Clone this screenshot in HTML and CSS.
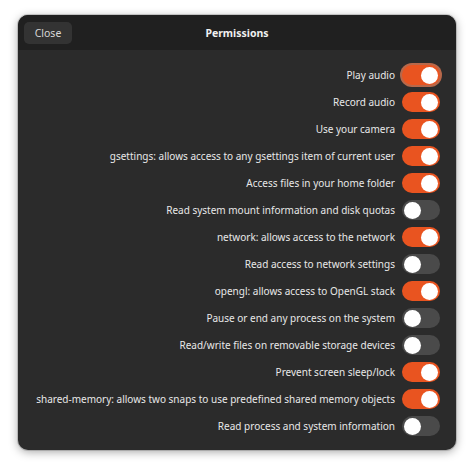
FILE: index.html
```html
<!DOCTYPE html>
<html>
<head>
<meta charset="utf-8">
<link rel="stylesheet" href="styles.css">
</head>
<body>
<div class="window">
  <div class="header">
    <button class="close">Close</button>
    <div class="title">Permissions</div>
  </div>
  <div class="list">
    <div class="row"><span>Play audio</span><span class="switch on focus"></span></div>
    <div class="row"><span>Record audio</span><span class="switch on"></span></div>
    <div class="row"><span>Use your camera</span><span class="switch on"></span></div>
    <div class="row"><span>gsettings: allows access to any gsettings item of current user</span><span class="switch on"></span></div>
    <div class="row"><span>Access files in your home folder</span><span class="switch on"></span></div>
    <div class="row"><span>Read system mount information and disk quotas</span><span class="switch"></span></div>
    <div class="row"><span>network: allows access to the network</span><span class="switch on"></span></div>
    <div class="row"><span>Read access to network settings</span><span class="switch"></span></div>
    <div class="row"><span>opengl: allows access to OpenGL stack</span><span class="switch on"></span></div>
    <div class="row"><span>Pause or end any process on the system</span><span class="switch"></span></div>
    <div class="row"><span>Read/write files on removable storage devices</span><span class="switch"></span></div>
    <div class="row"><span>Prevent screen sleep/lock</span><span class="switch on"></span></div>
    <div class="row"><span>shared-memory: allows two snaps to use predefined shared memory objects</span><span class="switch on"></span></div>
    <div class="row"><span>Read process and system information</span><span class="switch"></span></div>
  </div>
</div>
</body>
</html>
```
FILE: styles.css
```css
html, body {
  margin: 0;
  padding: 0;
  background: #ffffff;
  font-family: "Noto Sans", "DejaVu Sans", sans-serif;
}
body {
  padding: 15px 18px;
}
.window {
  width: 438px;
  height: 435px;
  background: #2b2b2b;
  border-radius: 10px;
  overflow: hidden;
  box-shadow: 0 2px 10px rgba(0,0,0,0.35), 0 0 0 1px rgba(0,0,0,0.15);
  display: flex;
  flex-direction: column;
}
.header {
  height: 35px;
  background: #202020;
  display: flex;
  align-items: center;
  padding: 0 6px;
  position: relative;
  flex: none;
}
.close {
  width: 48px;
  height: 22px;
  border: none;
  border-radius: 5px;
  background: #333333;
  color: #d8d8d8;
  font-family: inherit;
  font-size: 10.5px;
  padding: 0;
  margin-top: 1px;
}
.title {
  position: absolute;
  left: 0;
  right: 0;
  text-align: center;
  color: #f0f0f0;
  font-weight: bold;
  font-size: 10.5px;
  pointer-events: none;
}
.list {
  padding: 15px 16px 15px 0;
  display: flex;
  flex-direction: column;
  gap: 7px;
}
.row {
  display: flex;
  justify-content: flex-end;
  align-items: center;
  gap: 7px;
  height: 20px;
  color: #e8e8e8;
  font-size: 10px;
  white-space: nowrap;
}
.switch {
  width: 38px;
  height: 20px;
  border-radius: 10px;
  background: #4a4a4a;
  display: flex;
  align-items: center;
  padding: 0 2px;
  box-sizing: border-box;
  flex: none;
}
.switch::after {
  content: "";
  width: 17px;
  height: 17px;
  border-radius: 50%;
  background: #ffffff;
}
.switch.on {
  background: #e95420;
  justify-content: flex-end;
}
.switch.focus {
  box-shadow: 0 0 0 2px #b8684a;
}
```
